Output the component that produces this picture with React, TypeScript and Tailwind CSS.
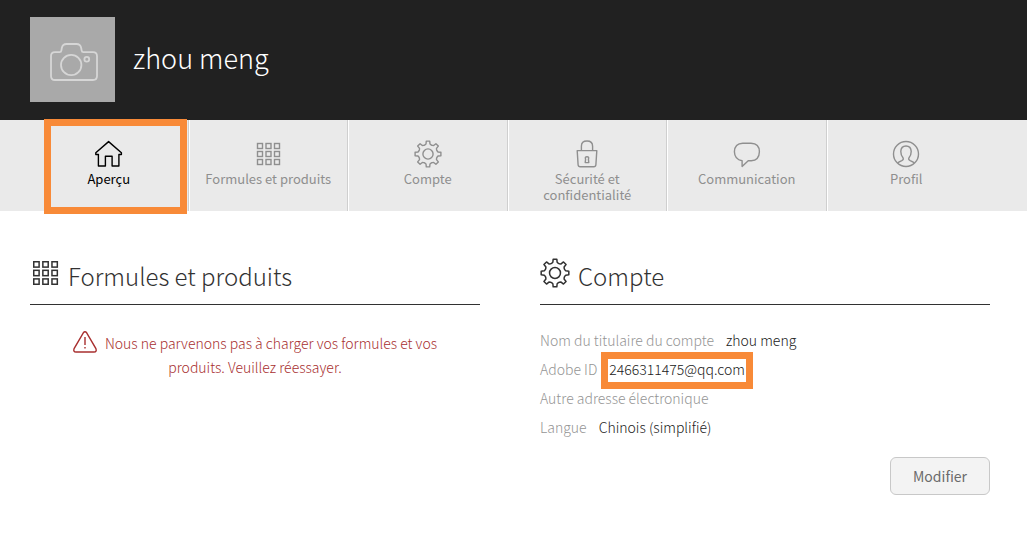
import type { ReactNode } from "react";

interface IconProps {
  className?: string;
}

interface Tab {
  label: string;
  icon: (props: IconProps) => ReactNode;
}

interface AccountRow {
  label: string;
  value?: string;
  highlighted?: boolean;
}

function CameraIcon({ className }: IconProps) {
  return (
    <svg viewBox="0 0 48 38" className={className} fill="none" stroke="currentColor" strokeWidth="1.8" aria-hidden="true">
      <path d="M5 9.2H9.5Q11.2 9.2 11.4 7.4L11.8 5Q12.6 1 16.5 1H26.5Q30.4 1 31.2 5L31.6 7.4Q31.8 9.2 33.5 9.2H43Q47 9.2 47 13V33Q47 37 43 37H5Q1 37 1 33V13Q1 9.2 5 9.2Z" />
      <circle cx="21.2" cy="22" r="10.2" />
      <circle cx="36.8" cy="16.2" r="2.4" />
    </svg>
  );
}

function HomeIcon({ className }: IconProps) {
  return (
    <svg viewBox="0 0 28 28" className={className} fill="none" stroke="currentColor" strokeWidth="1.4" strokeLinejoin="round" strokeLinecap="round" aria-hidden="true">
      <path d="M3.5 14.5H0.8V12.8L13.6 1.6L26.4 12.8V14.5H23.9V26H17.1V16.2H10.4V26H3.4V14.5Z" />
    </svg>
  );
}

function GridIcon({ className }: IconProps) {
  return (
    <svg viewBox="0 0 28 28" className={className} fill="none" stroke="currentColor" strokeWidth="1.4" aria-hidden="true">
      {[3.5, 11.5, 19.5].map((y) =>
        [3.5, 12, 20.5].map((x) => <rect key={`${x}-${y}`} x={x} y={y} width="5" height="5" />)
      )}
    </svg>
  );
}

// one tooth and the notch after it, repeated every 45 degrees
const TOOTH = [
  [-3.2, -9],
  [-2, -10],
  [-1.7, -12.9],
  [1.7, -12.9],
  [2, -10],
  [3.2, -9],
];

const GEAR_POINTS = [0, 1, 2, 3, 4, 5, 6, 7]
  .flatMap((i) => {
    const a = (i * Math.PI) / 4;
    return TOOTH.map(([x, y]) => {
      const px = 14 + x * Math.cos(a) - y * Math.sin(a);
      const py = 14 + x * Math.sin(a) + y * Math.cos(a);
      return `${px.toFixed(2)},${py.toFixed(2)}`;
    });
  })
  .join(" ");

function GearIcon({ className }: IconProps) {
  return (
    <svg viewBox="0 0 28 28" className={className} fill="none" stroke="currentColor" strokeWidth="1.4" strokeLinejoin="round" aria-hidden="true">
      <polygon points={GEAR_POINTS} />
      <circle cx="14" cy="14" r="5.1" />
    </svg>
  );
}

function LockIcon({ className }: IconProps) {
  return (
    <svg viewBox="0 0 28 28" className={className} fill="none" stroke="currentColor" strokeWidth="1.4" strokeLinejoin="round" aria-hidden="true">
      <path d="M4.2 10.6H23.8L22.9 24.8Q22.7 26.8 20.8 26.8H7.2Q5.3 26.8 5.1 24.8Z" />
      <path d="M8.4 10.6V6.2Q8.4 1 14 1Q19.6 1 19.6 6.2V10.6" />
      <path d="M12.6 19.2Q11.6 16.8 14 16.8Q16.4 16.8 15.4 19.2L15.8 22.6H12.2Z" />
    </svg>
  );
}

function BubbleIcon({ className }: IconProps) {
  return (
    <svg viewBox="0 0 28 28" className={className} fill="none" stroke="currentColor" strokeWidth="1.4" strokeLinejoin="round" aria-hidden="true">
      <path d="M9.8 3.2H18Q26.4 3.4 26.4 11.8Q26.2 20.4 18.2 20.8H15.2L9.1 26.4V20.8Q1.6 19.6 1.4 11.8Q1.6 3.4 9.8 3.2Z" />
    </svg>
  );
}

function ProfileIcon({ className }: IconProps) {
  return (
    <svg viewBox="0 0 28 28" className={className} fill="none" stroke="currentColor" strokeWidth="1.4" strokeLinejoin="round" aria-hidden="true">
      <circle cx="14" cy="14" r="12.5" />
      <path d="M5.6 23Q6.8 21.8 9.8 20.6Q12 19.6 11 17.8Q8.8 15 8.8 11.4Q9 6 14 6Q19 6 19.2 11.4Q19.2 15 17 17.8Q16 19.6 18.2 20.6Q21.2 21.8 22.4 23" />
    </svg>
  );
}

function WarningIcon({ className }: IconProps) {
  return (
    <svg viewBox="0 0 24 22" className={className} fill="none" stroke="currentColor" strokeWidth="1.4" aria-hidden="true">
      <path d="M10.3 1.8Q12 -0.2 13.7 1.8L22.9 17.6Q24 20.9 21 21H3Q0 20.9 1.1 17.6Z" />
      <path d="M12 6V14M12 16V17.6" />
    </svg>
  );
}

const TABS: Tab[] = [
  { label: "Aperçu", icon: HomeIcon },
  { label: "Formules et produits", icon: GridIcon },
  { label: "Compte", icon: GearIcon },
  { label: "Sécurité et confidentialité", icon: LockIcon },
  { label: "Communication", icon: BubbleIcon },
  { label: "Profil", icon: ProfileIcon },
];

const ACCOUNT_ROWS: AccountRow[] = [
  { label: "Nom du titulaire du compte", value: "zhou meng" },
  { label: "Adobe ID", value: "2466311475@qq.com", highlighted: true },
  { label: "Autre adresse électronique" },
  { label: "Langue", value: "Chinois (simplifié)" },
];

function SectionTitle({ icon: Icon, children }: { icon: Tab["icon"]; children: ReactNode }) {
  return (
    <h2 className="flex items-start gap-2 border-b border-[#323232] pb-[10px] text-2xl leading-9 font-light text-[#323232]">
      <Icon className="size-[30px]" />
      <span>{children}</span>
    </h2>
  );
}

export default function App() {
  const activeTab = "Aperçu";

  return (
    <div className="min-h-screen bg-white font-['Noto_Sans_CJK_SC','Noto_Sans',sans-serif] text-[#323232]">
      <header className="flex items-center gap-[18px] bg-[#212121] pt-[17px] pb-[18px] pl-[30px]">
        <button type="button" aria-label="Photo de profil" className="flex size-[85px] items-center justify-center bg-[#a9a9a9] text-[#d6d6d6]">
          <CameraIcon className="mt-1 ml-[3px] h-[38px] w-12" />
        </button>
        <h1 className="pb-1 text-[27px] leading-9 font-light text-white">zhou meng</h1>
      </header>

      <nav className="grid grid-cols-6 bg-[#eaeaea] pr-[41px] pl-[29px]">
        {TABS.map(({ label, icon: Icon }) => (
          <a
            key={label}
            href="#"
            aria-current={label === activeTab ? "page" : undefined}
            className={`relative flex h-[91px] flex-col items-center border-r border-l border-r-[#cfcfcf] border-l-white px-3 pt-5 text-center text-[13px] leading-4 first:border-l-transparent last:border-r-transparent ${
              label === activeTab ? "text-black" : "text-[#8f8f8f]"
            }`}
          >
            <Icon className="mb-[3px] size-7" />
            <span className="max-w-32">{label}</span>
            {label === activeTab && (
              <span className="absolute -top-px -bottom-[3px] left-[14px] w-[143px] border-[7px] border-[#f88a38]" />
            )}
          </a>
        ))}
      </nav>

      <main className="grid grid-cols-2 gap-[60px] pt-[47px] pr-[37px] pl-[30px]">
        <section>
          <SectionTitle icon={GridIcon}>Formules et produits</SectionTitle>
          <p className="mx-auto mt-[26px] max-w-[370px] text-center text-sm leading-6 font-light text-[#a82f2f]">
            <WarningIcon className="mr-2 inline-block h-[22px] w-6 align-[-4px]" />
            Nous ne parvenons pas à charger vos formules et vos produits. Veuillez réessayer.
          </p>
        </section>

        <section>
          <SectionTitle icon={GearIcon}>Compte</SectionTitle>
          <dl className="mt-[21px] text-sm leading-[29px] font-light">
            {ACCOUNT_ROWS.map((row) => (
              <div key={row.label} className="flex gap-3">
                <dt className="text-[#959595]">{row.label}</dt>
                {row.value && (
                  <dd className="relative text-[#212121]">
                    {row.value}
                    {row.highlighted && (
                      <span className="absolute -inset-x-2 -top-[3px] -bottom-[5px] border-[7px] border-[#f88a38]" />
                    )}
                  </dd>
                )}
              </div>
            ))}
          </dl>
          <div className="mt-[15px] flex justify-end">
            <button type="button" className="h-[38px] w-[100px] rounded-md border border-[#c8c8c8] bg-[#f3f3f3] text-sm text-[#6b6b6b]">
              Modifier
            </button>
          </div>
        </section>
      </main>
    </div>
  );
}
